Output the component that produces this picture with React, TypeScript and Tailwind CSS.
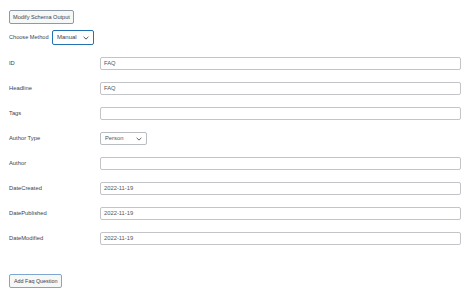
import React from "react";

const font = { fontFamily: '"Liberation Sans", Arial, sans-serif' };

function Chevron({ color = "#50575e" }: { color?: string }) {
  return (
    <svg width="6" height="4" viewBox="0 0 6 4" className="shrink-0">
      <path d="M0.6 0.8 L3 3.1 L5.4 0.8" fill="none" stroke={color} strokeWidth="0.9" />
    </svg>
  );
}

const rows: { label: string; value?: string; select?: string }[] = [
  { label: "ID", value: "FAQ" },
  { label: "Headline", value: "FAQ" },
  { label: "Tags", value: "" },
  { label: "Author Type", select: "Person" },
  { label: "Author", value: "" },
  { label: "DateCreated", value: "2022-11-19" },
  { label: "DatePublished", value: "2022-11-19" },
  { label: "DateModified", value: "2022-11-19" },
];

export default function App() {
  return (
    <div className="w-[474px] h-[288px] bg-white overflow-hidden text-[#3c434a]" style={font}>
      <div className="flex flex-col pl-[9px] pr-[13px] pt-[10px]">
        <div className="flex">
          <div className="h-[14px] px-[3px] flex items-center border border-[#8c9aa8] rounded-[2px] bg-[#f6f7f7] text-[5.6px] text-[#3c434a]">
            Modify Schema Output
          </div>
        </div>
        <div className="flex items-center mt-[6px] h-[15px]">
          <span className="text-[5.6px] w-[43px]">Choose Method</span>
          <div className="h-[15px] w-[42px] flex items-center justify-between pl-[4px] pr-[4px] border border-[#2271b1] rounded-[2px] text-[6px] text-[#3c434a]">
            <span>Manual</span>
            <Chevron color="#3c434a" />
          </div>
        </div>
        <div className="flex flex-col mt-[6px]">
          {rows.map((r) => (
            <div key={r.label} className="flex items-center h-[25px]">
              <span className="w-[91px] text-[5.8px]">{r.label}</span>
              {r.select ? (
                <div className="h-[13px] w-[47px] flex items-center justify-between pl-[4px] pr-[4px] border border-[#b9bcc0] rounded-[2px] text-[5.8px] text-[#50575e]">
                  <span>{r.select}</span>
                  <Chevron />
                </div>
              ) : (
                <div className="h-[13px] flex-1 flex items-center pl-[3px] border border-[#c3c4c7] rounded-[2px] text-[5.8px] text-[#50575e]">
                  {r.value}
                </div>
              )}
            </div>
          ))}
        </div>
        <div className="flex mt-[23px]">
          <div className="h-[14px] px-[4px] flex items-center border border-[#7ea6cf] rounded-[2px] bg-[#f6f7f7] text-[5.4px] text-[#3c434a]">
            Add Faq Question
          </div>
        </div>
      </div>
    </div>
  );
}
